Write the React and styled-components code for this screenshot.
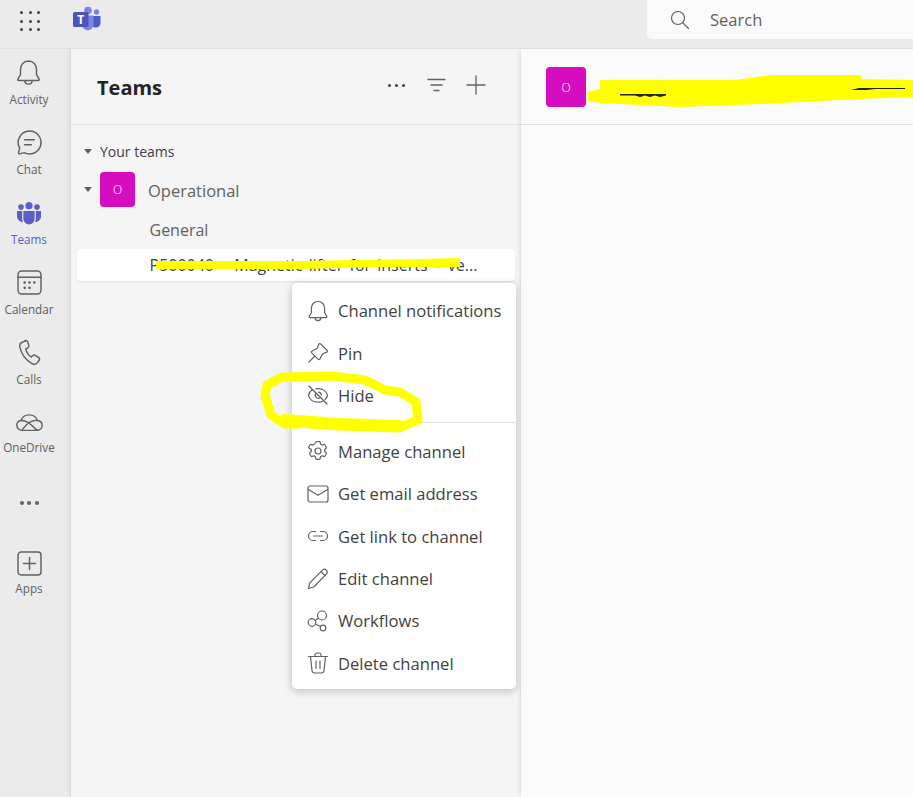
import React from "react";
import styled, { createGlobalStyle } from "styled-components";

const FONT = `"Open Sans", "Noto Sans", "Liberation Sans", sans-serif`;

const Stroke = ({ size = 24, color = "#616161", width = 1.2, children }) => (
  <svg width={size} height={size} viewBox="0 0 24 24" fill="none" stroke={color} strokeWidth={width} strokeLinecap="round" strokeLinejoin="round">
    {children}
  </svg>
);

const BellIcon = (p) => (
  <Stroke {...p}>
    <path d="M12 2.5c-4 0-6.6 3-6.6 6.8v4.4L3.2 17.4c-.3.6.1 1.2.8 1.2h16c.7 0 1.1-.6.8-1.2l-2.2-3.7V9.3c0-3.800-2.600-6.800-6.600-6.800z" />
    <path d="M9 18.600c0 1.800 1.300 3 3 3s3-1.200 3-3" />
  </Stroke>
);
const ChatIcon = (p) => (
  <Stroke {...p}>
    <path d="M12 2.500a9.500 9.500 0 1 1-4.400 17.900l-3.700 1c-.6.100-1.100-.4-1-1l1-3.700A9.500 9.500 0 0 1 12 2.500z" />
    <path d="M8 9.800h8M8 13.800h5.500" />
  </Stroke>
);
const TeamsIcon = () => (
  <svg width="26" height="29" viewBox="0 -3.500 26 29" fill="#5b5fc7">
    <circle cx="13" cy="4.200" r="3.600" />
    <circle cx="5" cy="5.600" r="2.800" />
    <circle cx="21" cy="5.600" r="2.800" />
    <path d="M7.400 9.400h11.200v8a5.600 5.600 0 0 1-11.200 0z" />
    <path d="M1 9.400h5.200v8c0 1.200.3 2.200.8 3.100C3.600 20.600 1 18 1 15zM25 9.400h-5.200v8c0 1.200-.3 2.200-.8 3.100 3.400.1 6-2.500 6-5.500z" />
  </svg>
);
const CalendarIcon = (p) => (
  <Stroke {...p}>
    <rect x="2.500" y="2.500" width="19" height="19" rx="3" />
    <path d="M2.500 7.600h19" />
    <g fill="#616161" stroke="none">
      <circle cx="8" cy="12" r="1.100" />
      <circle cx="12" cy="12" r="1.100" />
      <circle cx="16" cy="12" r="1.100" />
      <circle cx="8" cy="16.400" r="1.100" />
      <circle cx="12" cy="16.400" r="1.100" />
    </g>
  </Stroke>
);
const PhoneIcon = (p) => (
  <Stroke {...p}>
    <path d="M8.600 2.600 6.400 3.300C4.600 3.900 3.600 5.700 4 7.600c1.300 5.700 5 10.700 10 13.600 1.600.9 3.600.5 4.700-1l1.200-1.600c.6-.8.4-1.900-.4-2.500l-2.500-1.600c-.7-.5-1.600-.4-2.300.1l-1.300 1.100c-2.300-1.500-3.900-4-4.500-6.700l1.500-.7c.8-.4 1.200-1.300 1-2.200l-.8-2.700c-.3-1-1.300-1.500-2.500-1.200z" />
  </Stroke>
);
const CloudIcon = (p) => (
  <Stroke {...p}>
    <path d="M6.500 18.500c-2.800 0-5-1.700-5-4.200 0-2 1.500-3.700 3.600-4C6 7.300 8.700 5.700 11.700 5.700c3.200 0 5.900 1.800 6.700 4.600 2.400.2 4.100 1.900 4.100 4 0 2.400-2 4.200-4.800 4.200z" />
    <path d="M5.100 10.300c3.500-.3 6 1.200 13.300 8.200M18.400 10.300c-3.400-.4-5.800.8-8.300 3L6 17.900" />
  </Stroke>
);
const AppsIcon = (p) => (
  <Stroke {...p}>
    <rect x="2.500" y="2.500" width="19" height="19" rx="2.500" />
    <path d="M12 7v10M7 12h10" />
  </Stroke>
);
const PinIcon = (p) => (
  <Stroke {...p}>
    <path d="M14.500 2.800 21.200 9.500c.5.500.3 1.300-.3 1.600l-4.200 1.700-2.900 5.300c-.3.600-1.100.7-1.600.2l-6.500-6.500c-.5-.5-.4-1.300.2-1.600l5.300-2.900 1.700-4.200c.3-.6 1.100-.8 1.600-.3z" />
    <path d="M8.500 15.500 2.800 21.200" />
  </Stroke>
);
const EyeOffIcon = (p) => (
  <Stroke {...p}>
    <path d="M3 3l18 18" />
    <path d="M6.200 6.800C4.200 8.100 2.900 10 2.400 12.400c1 4 4.800 6.800 9.600 6.800 1.700 0 3.300-.4 4.700-1M9.800 5.900c.7-.1 1.400-.2 2.200-.2 4.800 0 8.600 2.800 9.600 6.700-.4 1.600-1.300 3-2.500 4.100" />
    <path d="M9.700 10.200a3.300 3.300 0 0 0 4.500 4.600M12.500 9.100a3.300 3.300 0 0 1 2.900 3" />
  </Stroke>
);
const GearIcon = (p) => (
  <Stroke {...p}>
    <circle cx="12" cy="12" r="3" />
    <path d="M10 2.700a10 10 0 0 1 4 0l.6 2.600c.5.200 1 .5 1.400.8l2.500-.8a10 10 0 0 1 2 3.500l-1.900 1.800a6 6 0 0 1 0 1.700l1.900 1.800a10 10 0 0 1-2 3.500l-2.500-.8c-.4.300-.9.600-1.400.8l-.6 2.600a10 10 0 0 1-4 0l-.6-2.600c-.5-.2-1-.5-1.400-.8l-2.500.8a10 10 0 0 1-2-3.500l1.900-1.800a6 6 0 0 1 0-1.700L2.500 8.800a10 10 0 0 1 2-3.500l2.500.8c.4-.3.900-.6 1.400-.8z" />
  </Stroke>
);
const MailIcon = (p) => (
  <Stroke {...p}>
    <rect x="2" y="4" width="20" height="16" rx="2" />
    <path d="M2.300 7.500 12 13.200l9.700-5.700" />
  </Stroke>
);
const LinkIcon = (p) => (
  <Stroke {...p}>
    <path d="M9.500 7.500H7a4.500 4.500 0 0 0 0 9h2.500M14.500 7.500H17a4.500 4.500 0 0 1 0 9h-2.500M7.500 12h9" />
  </Stroke>
);
const PencilIcon = (p) => (
  <Stroke {...p}>
    <path d="M2.500 21.500l1.300-5.700L16.800 2.800a2.800 2.800 0 0 1 3.900 3.900L7.900 20z" />
    <path d="M15 4.600l3.900 3.900" />
  </Stroke>
);
const FlowIcon = (p) => (
  <Stroke {...p}>
    <circle cx="16" cy="6.500" r="4.500" />
    <circle cx="6" cy="13.500" r="3.800" />
    <circle cx="17" cy="19" r="2.800" />
    <path d="M9.200 11.500l3.300-2.300M9.500 15l5 2.500" />
  </Stroke>
);
const TrashIcon = (p) => (
  <Stroke {...p}>
    <path d="M2.500 5.500h19M9 5.500V4a2 2 0 0 1 2-2h2a2 2 0 0 1 2 2v1.500" />
    <path d="M4.500 5.500 6 19.500A2.800 2.800 0 0 0 8.800 22h6.400a2.800 2.800 0 0 0 2.800-2.500l1.500-14" />
    <path d="M10 10v7.500M14 10v7.500" />
  </Stroke>
);

const GlobalStyle = createGlobalStyle`
  html, body { margin: 0; padding: 0; }
  body { font-family: ${FONT}; background: #f5f5f5; color: #424242; }
`;

const Page = styled.div`
  position: relative;
  width: 913px;
  height: 797px;
  overflow: hidden;
  display: grid;
  grid-template-rows: 49px 1fr;
`;

const TopBar = styled.header`
  display: flex;
  align-items: flex-start;
  background: #ebebeb;
  border-bottom: 1px solid #e0e0e0;
  position: relative;
  z-index: 3;
`;

const Waffle = styled.div`
  display: grid;
  grid-template-columns: repeat(3, 3px);
  gap: 5.500px;
  margin: 11px 0 0 20px;
`;

const Dot = styled.span`
  width: 3px;
  height: 3px;
  border-radius: 50%;
  background: #424242;
`;

const Logo = styled.div`
  margin: 6px 0 0 33px;
  line-height: 0;
`;

const SearchBox = styled.div`
  margin-left: auto;
  width: 266px;
  height: 39px;
  display: flex;
  align-items: center;
  gap: 20px;
  padding-left: 23px;
  box-sizing: border-box;
  background: #fafafa;
  border-bottom-left-radius: 5px;
  color: #616161;
  font-size: 16.500px;
`;

const Body = styled.div`
  display: grid;
  grid-template-columns: 71px 450px 1fr;
  min-height: 0;
`;

const Rail = styled.nav`
  background: #ebebeb;
  padding: 9px 13px 0 0;
  display: flex;
  flex-direction: column;
  align-items: center;
`;

const RailItem = styled.div`
  height: 70px;
  display: flex;
  flex-direction: column;
  align-items: center;
  font-size: 11.700px;
  line-height: 16px;
  white-space: nowrap;
  color: ${(p) => (p.$active ? "#5b5fc7" : "#616161")};
  svg {
    display: block;
    margin-bottom: ${(p) => (p.$tight ? 2 : 4)}px;
  }
`;

const RailMore = styled.div`
  height: 71px;
  display: flex;
  align-items: flex-start;
  justify-content: center;
  gap: 3.500px;
  padding-top: 23px;
  box-sizing: border-box;
`;

const RailDot = styled.span`
  width: 4px;
  height: 4px;
  border-radius: 50%;
  background: #616161;
`;

const Panel = styled.section`
  background: #f5f5f5;
  box-shadow: 0 0 5px rgba(0, 0, 0, 0.16);
  position: relative;
  z-index: 1;
`;

const PanelHeader = styled.div`
  height: 76px;
  border-bottom: 1px solid #e0e0e0;
  display: flex;
  align-items: center;
  padding: 2px 35px 0 26px;
  box-sizing: border-box;
`;

const PanelTitle = styled.h1`
  margin: 0 auto 0 0;
  font-size: 20px;
  font-weight: 700;
  color: #242424;
`;

const HeaderActions = styled.div`
  display: flex;
  align-items: center;
  gap: 19px;
  line-height: 0;
  margin-top: -5px;
`;

const SmallDots = styled.div`
  display: flex;
  gap: 4px;
  margin-right: 3px;
`;

const SmallDot = styled.span`
  width: 3px;
  height: 3px;
  border-radius: 50%;
  background: #424242;
`;

const Tree = styled.div`
  padding: 14px 6px 0 6px;
`;

const Caret = styled.span`
  width: 0;
  height: 0;
  border-left: 4px solid transparent;
  border-right: 4px solid transparent;
  border-top: 5px solid #616161;
  margin: 0 8px 0 7px;
  flex: none;
`;

const GroupRow = styled.div`
  display: flex;
  align-items: center;
  height: 24px;
  font-size: 14px;
  color: #424242;
`;

const TeamRow = styled.div`
  display: flex;
  align-items: center;
  height: 35px;
  margin-top: 9px;
  font-size: 16.500px;
  color: #616161;
`;

const Avatar = styled.div`
  width: ${(p) => p.$size}px;
  height: ${(p) => p.$size}px;
  flex: none;
  border-radius: 4px;
  background: #d60cc0;
  color: #fff;
  display: flex;
  align-items: center;
  justify-content: center;
  font-size: 12px;
  font-weight: 300;
`;

const TeamName = styled.span`
  margin-left: 13px;
  padding-top: 1px;
`;

const ChannelRow = styled.div`
  display: flex;
  align-items: center;
  height: ${(p) => (p.$selected ? 32 : 36)}px;
  margin-top: ${(p) => (p.$selected ? 1 : 5)}px;
  padding-left: 72.500px;
  width: 438px;
  box-sizing: border-box;
  border-radius: 4px;
  font-size: 16px;
  white-space: pre;
  word-spacing: ${(p) => (p.$selected ? 2 : 0)}px;
  color: ${(p) => (p.$selected ? "#424242" : "#616161")};
  background: ${(p) => (p.$selected ? "#fff" : "transparent")};
  box-shadow: ${(p) => (p.$selected ? "0 1px 2px rgba(0,0,0,.08)" : "none")};
`;

const Main = styled.main`
  background: #fafafa;
  box-shadow: 0 0 5px rgba(0, 0, 0, 0.16);
  position: relative;
  z-index: 2;
`;

const MainHeader = styled.div`
  height: 76px;
  box-sizing: border-box;
  border-bottom: 1px solid #e0e0e0;
  padding: 18px 0 0 25px;
`;

const Menu = styled.ul`
  position: absolute;
  left: 292px;
  top: 283px;
  width: 224px;
  height: 406px;
  box-sizing: border-box;
  margin: 0;
  padding: 6.500px 0 0;
  list-style: none;
  background: #fff;
  border-radius: 5px;
  box-shadow: 0 2px 8px rgba(0, 0, 0, 0.24);
  z-index: 4;
`;

const MenuItem = styled.li`
  height: 42.400px;
  display: flex;
  align-items: center;
  gap: 8px;
  padding-left: 14px;
  font-size: 16.600px;
  color: #424242;
  white-space: nowrap;
  svg { flex: none; }
`;

const MenuDivider = styled.li`
  height: 1px;
  margin: 5.500px 0 7px;
  background: #e0e0e0;
`;

const Scribble = styled.svg`
  position: absolute;
  left: 0;
  top: 0;
  pointer-events: none;
  z-index: 5;
`;

const railItems = [
  { label: "Activity", Icon: BellIcon },
  { label: "Chat", Icon: ChatIcon },
  { label: "Teams", Icon: TeamsIcon, active: true },
  { label: "Calendar", Icon: CalendarIcon },
  { label: "Calls", Icon: PhoneIcon },
  { label: "OneDrive", Icon: CloudIcon, tight: true },
];

const menuTop = [
  { label: "Channel notifications", Icon: BellIcon },
  { label: "Pin", Icon: PinIcon },
  { label: "Hide", Icon: EyeOffIcon },
];

const menuBottom = [
  { label: "Manage channel", Icon: GearIcon },
  { label: "Get email address", Icon: MailIcon },
  { label: "Get link to channel", Icon: LinkIcon },
  { label: "Edit channel", Icon: PencilIcon },
  { label: "Workflows", Icon: FlowIcon },
  { label: "Delete channel", Icon: TrashIcon },
];

const App = () => {
  return (
    <Page>
      <GlobalStyle />
      <TopBar>
        <Waffle>
          {Array.from({ length: 9 }).map((_, i) => (
            <Dot key={i} />
          ))}
        </Waffle>
        <Logo>
          <svg width="28" height="25" viewBox="0 0 28 25">
            <circle cx="23.500" cy="6" r="2.700" fill="#7b83eb" />
            <path d="M18 10h9.500v6.500c0 3-2 5-4.500 5s-5-2-5-5z" fill="#5059c9" />
            <circle cx="15" cy="4.500" r="3.800" fill="#7b83eb" />
            <path d="M9 9.500h11.500v9c0 3.200-2.500 5.800-5.700 5.800S9 21.700 9 18.500z" fill="#7b83eb" />
            <rect x="0" y="6" width="15.500" height="15" rx="1.500" fill="#4b53bc" />
            <text x="7.700" y="18" textAnchor="middle" fontFamily={FONT} fontSize="12" fontWeight="700" fill="#fff">T</text>
          </svg>
        </Logo>
        <SearchBox>
          <svg width="20" height="20" viewBox="0 0 20 20" fill="none" stroke="#616161" strokeWidth="1.200" strokeLinecap="round">
            <circle cx="8" cy="8" r="6.500" />
            <path d="M12.800 12.800l5.700 5.700" />
          </svg>
          Search
        </SearchBox>
      </TopBar>
      <Body>
        <Rail>
          {railItems.map(({ label, Icon, active, tight }) => (
            <RailItem key={label} $active={active} $tight={tight}>
              <Icon size={29} />
              {label}
            </RailItem>
          ))}
          <RailMore>
            <RailDot />
            <RailDot />
            <RailDot />
          </RailMore>
          <RailItem $tight>
            <AppsIcon size={29} />
            <span>Apps</span>
          </RailItem>
        </Rail>
        <Panel>
          <PanelHeader>
            <PanelTitle>Teams</PanelTitle>
            <HeaderActions>
              <SmallDots>
                <SmallDot />
                <SmallDot />
                <SmallDot />
              </SmallDots>
              <svg width="20" height="14" viewBox="0 0 20 14" fill="none" stroke="#616161" strokeWidth="1.300" strokeLinecap="round">
                <path d="M1 1.500h17M4 7h11M7 12.500h5" />
              </svg>
              <svg width="20" height="20" viewBox="0 0 20 20" fill="none" stroke="#616161" strokeWidth="1.300" strokeLinecap="round">
                <path d="M10 1v18M1 10h18" />
              </svg>
            </HeaderActions>
          </PanelHeader>
          <Tree>
            <GroupRow>
              <Caret />
              Your teams
            </GroupRow>
            <TeamRow>
              <Caret />
              <Avatar $size={35}>O</Avatar>
              <TeamName>Operational</TeamName>
            </TeamRow>
            <ChannelRow>General</ChannelRow>
            <ChannelRow $selected>P500040 – Magnetic lifter for inserts – ve...</ChannelRow>
          </Tree>
        </Panel>
        <Main>
          <MainHeader>
            <Avatar $size={40}>O</Avatar>
          </MainHeader>
        </Main>
      </Body>
      <Menu>
        {menuTop.map(({ label, Icon }) => (
          <MenuItem key={label}>
            <Icon size={24} />
            {label}
          </MenuItem>
        ))}
        <MenuDivider />
        {menuBottom.map(({ label, Icon }) => (
          <MenuItem key={label}>
            <Icon size={24} />
            {label}
          </MenuItem>
        ))}
      </Menu>
      <Scribble width="913" height="797" viewBox="0 0 913 797">
        <path d="M587 92l13-3v-9l135 0 35-5h90l2 4 51 1v17l-53 2-100 5-80 3-80-4-12-2z" fill="#ffff00" />
        <path d="M620 94h46v1.500l-6 1.500-5-1.500-5 1.500-5-1.500-5 1.500-5-1.500h-15zM851 90l8-2h46v1h-30l-8 1z" fill="#242424" />
        <path d="M156 261h144l120-2 40-1v9l-80 0-80 2H156z" fill="#ffff00" />
        <path d="M296 424l-11 0-14-9-6-20 2-10 15-8 50-1 33 4 20 10 15 2 16 10 2 18-20 8-60-2-40-3-4 2" fill="none" stroke="#ffff00" strokeWidth="9" strokeLinejoin="round" />
        <path d="M285 420l55 4 60 2" fill="none" stroke="#ffff00" strokeWidth="12" strokeLinecap="round" />
      </Scribble>
    </Page>
  );
};

export default App;
